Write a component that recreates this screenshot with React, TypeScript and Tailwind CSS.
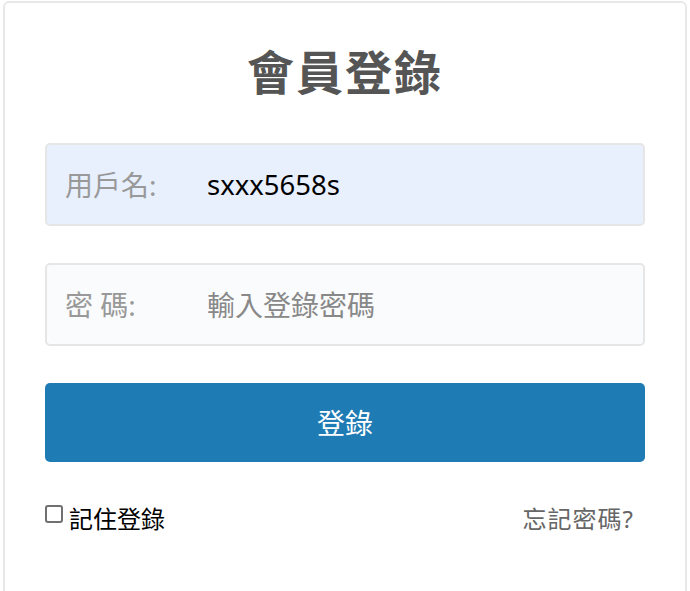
import React from "react";

export default function App() {
  const font = { fontFamily: '"Noto Sans", "Noto Sans CJK TC", sans-serif' };
  return (
    <div className="w-[690px] h-[591px] overflow-hidden bg-white" style={font}>
      <div className="ml-[3px] mt-[1px] w-[684px] h-[620px] border-2 border-[#e8e8e8] rounded-[6px] px-[40px] pt-[39px]">
        <h1 className="text-center text-[47px] leading-[60px] font-bold text-[#555555] tracking-[2px]">會員登錄</h1>
        <div className="mt-[41px] h-[83px] flex items-center bg-[#e8f0fe] border-2 border-[#e6e6e6] rounded-[5px] pl-[18px]">
          <span className="w-[142px] text-[28px] text-[#999999]">用戶名:</span>
          <span className="text-[27.5px] text-black">sxxx5658s</span>
        </div>
        <div className="mt-[37px] h-[83px] flex items-center bg-[#fafbfc] border-2 border-[#e6e6e6] rounded-[5px] pl-[18px]">
          <span className="w-[142px] text-[28px] text-[#999999]">密 碼:</span>
          <span className="text-[28px] text-[#888888]">輸入登錄密碼</span>
        </div>
        <div className="mt-[37px] h-[79px] flex items-center justify-center bg-[#1f7bb4] rounded-[5px] text-white text-[28px]">登錄</div>
        <div className="mt-[39px] flex items-center justify-between pr-[11px]">
          <div className="flex items-center">
            <span className="block shrink-0 w-[18px] h-[18px] border-2 border-[#707070] rounded-[3px] ml-[0px] mr-[6px] -mt-[10px]"></span>
            <span className="text-[24px] text-black">記住登錄</span>
          </div>
          <span className="text-[24px] tracking-[1px] text-[#666666]">忘記密碼?</span>
        </div>
      </div>
    </div>
  );
}
